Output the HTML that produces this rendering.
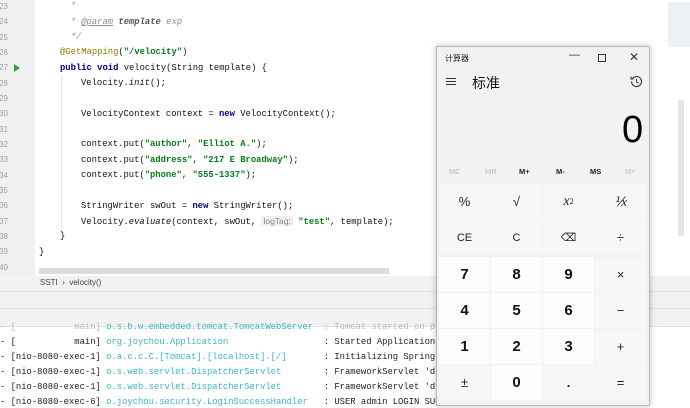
<!DOCTYPE html>
<html><head><meta charset="utf-8"><style>
*{margin:0;padding:0;box-sizing:border-box}
body{width:690px;height:406px;overflow:hidden;background:#fff;position:relative;font-family:"Liberation Mono",monospace;}
.gut{position:absolute;left:0;top:0;width:35px;height:276px;background:#f0f0f0}
.ln{position:absolute;left:-4px;width:12px;text-align:right;font-size:8px;color:#a0a0a0;font-family:"Liberation Sans",sans-serif}
.c{position:absolute;font-size:8.85px;white-space:pre;color:#111;line-height:12px}
.k{color:#000080;font-weight:bold}
.s{color:#067d17;font-weight:bold}
.cm{color:#8c8c8c;font-style:italic}
.an{color:#808000}
.i{font-style:italic}
.bar{position:absolute;left:0;width:690px;background:#f2f2f2;border-bottom:1px solid #e2e2e2}
.con{position:absolute;font-size:8.85px;white-space:pre;color:#222;line-height:12px}
.cy{color:#3bb5c6}
.calc{position:absolute;left:436px;top:46px;width:214px;height:360px;background:#f2f2f2;border:1px solid #b8b8b8;box-shadow:0 0 6px rgba(0,0,0,.25);font-family:"Liberation Sans","Noto Sans CJK SC",sans-serif}
.b{position:absolute;width:51px;height:35px;display:flex;align-items:center;justify-content:center;font-size:13px;color:#222}
.w{background:#fcfcfc;font-size:15px;font-weight:bold;color:#111}
.g{background:#f7f7f7}
.m{position:absolute;top:120px;font-size:7.5px;font-weight:bold;color:#222}
</style></head><body>
<div class="gut"></div>
<div class="ln" style="top:2px">23</div><div class="ln" style="top:17px">24</div><div class="ln" style="top:33px">25</div><div class="ln" style="top:48px">26</div><div class="ln" style="top:63px">27</div><div class="ln" style="top:79px">28</div><div class="ln" style="top:94px">29</div><div class="ln" style="top:109px">30</div><div class="ln" style="top:125px">31</div><div class="ln" style="top:140px">32</div><div class="ln" style="top:155px">33</div><div class="ln" style="top:171px">34</div><div class="ln" style="top:186px">35</div><div class="ln" style="top:201px">36</div><div class="ln" style="top:217px">37</div><div class="ln" style="top:232px">38</div><div class="ln" style="top:247px">39</div><div class="ln" style="top:263px">40</div>
<div style="position:absolute;left:14px;top:64px;width:0;height:0;border-left:6px solid #3c9a3c;border-top:4px solid transparent;border-bottom:4px solid transparent"></div>
<div style="position:absolute;left:61px;top:75px;width:1px;height:158px;background:#e6e6e6"></div>
<div class="c cm" style="left:60px;top:0px">  *</div>
<div class="c cm" style="left:60px;top:16px">  * <u>@param</u> <b style="color:#555">template</b> exp</div>
<div class="c cm" style="left:60px;top:31px">  */</div>
<div class="c" style="left:60px;top:46px"><span class="an">@GetMapping</span>(<span class="s">"/velocity"</span>)</div>
<div class="c" style="left:60px;top:62px"><span class="k">public void</span> velocity(String template) {</div>
<div class="c" style="left:81px;top:77px">Velocity.<span class="i">init</span>();</div>
<div class="c" style="left:81px;top:108px">VelocityContext context = <span class="k">new</span> VelocityContext();</div>
<div class="c" style="left:81px;top:138px">context.put(<span class="s">"author"</span>, <span class="s">"Elliot A."</span>);</div>
<div class="c" style="left:81px;top:154px">context.put(<span class="s">"address"</span>, <span class="s">"217 E Broadway"</span>);</div>
<div class="c" style="left:81px;top:169px">context.put(<span class="s">"phone"</span>, <span class="s">"555-1337"</span>);</div>
<div class="c" style="left:81px;top:200px">StringWriter swOut = <span class="k">new</span> StringWriter();</div>
<div class="c" style="left:81px;top:215px">Velocity.<span class="i">evaluate</span>(context, swOut, <span style="background:#f0f0f0;color:#888;font-family:'Liberation Sans',sans-serif;font-size:8.5px;padding:0 2px">logTag:</span> <span class="s">"test"</span>, template);</div>
<div class="c" style="left:60px;top:230px">}</div>
<div class="c" style="left:39px;top:246px">}</div>
<div style="position:absolute;left:39px;top:268px;width:350px;height:6px;background:#dcdcdc"></div>
<div class="bar" style="top:276px;height:16px"><span style="position:absolute;left:40px;top:2px;font:8px 'Liberation Sans',sans-serif;color:#444">SSTI &nbsp;›&nbsp; velocity()</span></div>
<div class="bar" style="top:292px;height:17px"></div>
<div class="bar" style="top:309px;height:18px"></div>
<div class="con" style="left:0;top:321px;color:#bbb">- [           main] <span class="cy">o.s.b.w.embedded.tomcat.TomcatWebServer</span>  : Tomcat started on p</div>
<div class="con" style="left:0;top:336px">- [           main] <span class="cy">org.joychou.Application</span>                  : Started Application                         24)</div>
<div class="con" style="left:0;top:351px">- [nio-8080-exec-1] <span class="cy">o.a.c.c.C.[Tomcat].[localhost].[/]</span>       : Initializing Spring</div>
<div class="con" style="left:0;top:366px">- [nio-8080-exec-1] <span class="cy">o.s.web.servlet.DispatcherServlet</span>        : FrameworkServlet 'di                        d</div>
<div class="con" style="left:0;top:381px">- [nio-8080-exec-1] <span class="cy">o.s.web.servlet.DispatcherServlet</span>        : FrameworkServlet 'di                        ted in 2</div>
<div class="con" style="left:0;top:396px">- [nio-8080-exec-6] <span class="cy">o.joychou.security.LoginSuccessHandler</span>   : USER admin LOGIN SUCCESS.</div>
<div style="position:absolute;left:678px;top:100px;width:6px;height:136px;background:#e6e6e6"></div>
<div style="position:absolute;left:668px;top:2px;width:22px;height:45px;background:#e8eef0;opacity:.8"></div>

<div class="calc">
<div style="position:absolute;left:8px;top:6px;font-size:8px;color:#222">计算器</div>
<div style="position:absolute;left:132px;top:2px;font-size:11px;color:#333">—</div>
<div style="position:absolute;left:161px;top:7px;width:8px;height:8px;border:1px solid #333"></div>
<div style="position:absolute;left:192px;top:3px;font-size:12px;color:#333">✕</div>
<div style="position:absolute;left:9px;top:31px;width:10px;border-top:1px solid #333;height:7px;border-bottom:1px solid #333"></div>
<div style="position:absolute;left:9px;top:34px;width:10px;height:1px;background:#333"></div>
<div style="position:absolute;left:35px;top:26px;font-size:14px;color:#111">标准</div>
<svg style="position:absolute;left:193px;top:28px" width="13" height="13" viewBox="0 0 13 13"><path d="M2.5 3.5A5 5 0 1 1 1.5 6.5" fill="none" stroke="#333" stroke-width="1.1"/><path d="M1 1.5v2.5h2.5" fill="none" stroke="#333" stroke-width="1.1"/><path d="M6.5 4v3l2 1.2" fill="none" stroke="#333" stroke-width="1"/></svg>
<div style="position:absolute;left:185px;top:62px;font-size:38px;color:#000">0</div>
<div class="m" style="left:12px;color:#bbb;font-weight:normal">MC</div>
<div class="m" style="left:48px;color:#bbb;font-weight:normal">MR</div>
<div class="m" style="left:82px">M+</div>
<div class="m" style="left:119px">M-</div>
<div class="m" style="left:153px">MS</div>
<div class="m" style="left:188px;color:#bbb;font-weight:normal">M˅</div>
<div class="b g" style="left:2px;top:137px">%</div>
<div class="b g" style="left:54px;top:137px">√</div>
<div class="b g" style="left:106px;top:137px;font-family:'Liberation Serif',serif;font-style:italic;font-size:14px">x<sup style="font-size:8px;font-style:normal">2</sup></div>
<div class="b g" style="left:158px;top:137px;font-family:'Liberation Serif',serif;font-style:italic;font-size:13px">⅟x</div>
<div class="b g" style="left:2px;top:173px;font-size:11px">CE</div>
<div class="b g" style="left:54px;top:173px;font-size:11px">C</div>
<div class="b g" style="left:106px;top:173px;font-size:11px">⌫</div>
<div class="b g" style="left:158px;top:173px">÷</div>
<div class="b w" style="left:2px;top:210px">7</div><div class="b w" style="left:54px;top:210px">8</div><div class="b w" style="left:106px;top:210px">9</div><div class="b g" style="left:158px;top:210px">×</div>
<div class="b w" style="left:2px;top:246px">4</div><div class="b w" style="left:54px;top:246px">5</div><div class="b w" style="left:106px;top:246px">6</div><div class="b g" style="left:158px;top:246px">−</div>
<div class="b w" style="left:2px;top:282px">1</div><div class="b w" style="left:54px;top:282px">2</div><div class="b w" style="left:106px;top:282px">3</div><div class="b g" style="left:158px;top:282px">+</div>
<div class="b g" style="left:2px;top:318px">±</div><div class="b w" style="left:54px;top:318px">0</div><div class="b g" style="left:106px;top:318px;font-weight:bold">.</div><div class="b g" style="left:158px;top:318px">=</div>
</div>
</body></html>
